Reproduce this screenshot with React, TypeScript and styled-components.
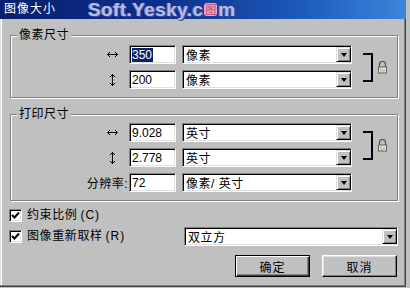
import React from 'react';
import styled, { createGlobalStyle } from 'styled-components';

const GlobalStyle = createGlobalStyle`
  html, body {
    margin: 0;
    padding: 0;
    background: #c0c0c0;
  }
  body {
    font-family: "Liberation Sans", "Noto Sans CJK SC", sans-serif;
    font-size: 12px;
    color: #000;
  }
`;

const Window = styled.div`
  width: 406px;
  height: 287px;
  box-sizing: border-box;
  background: #c0c0c0;
  box-shadow: inset -1px -1px #404040, inset -2px -2px #808080, inset 1px 1px #dfdfdf, inset 2px 2px #fff;
  display: flex;
  flex-direction: column;
  overflow: hidden;
`;

const TitleBar = styled.div`
  height: 19px;
  flex: none;
  display: flex;
  align-items: center;
  padding-left: 4px;
  gap: 32px;
  background: linear-gradient(90deg, #08206e 0%, #0c2f8c 40%, #1d5cbc 75%, #3c86da 100%);
`;

const Title = styled.span`
  color: #fff;
  font-size: 12px;
  line-height: 19px;
  letter-spacing: 1px;
`;

const Watermark = styled.span`
  font-family: "Liberation Sans", sans-serif;
  font-weight: 700;
  font-size: 19px;
  line-height: 19px;
  color: #b4bce4;
  letter-spacing: 0.4px;
  text-shadow: 1px 1px 0 #3c4c9c, -1px 0 0 #6070b8;
  display: flex;
  align-items: center;
`;

const Stamp = styled.span`
  font-family: "Noto Sans CJK SC", sans-serif;
  font-weight: 400;
  font-size: 11px;
  line-height: 13px;
  width: 13px;
  height: 13px;
  text-align: center;
  color: #c04070;
  background: #e8a8c8;
  border-radius: 3px;
  text-shadow: none;
  margin: 0 1px;
`;

const Body = styled.div`
  flex: 1;
  display: flex;
  flex-direction: column;
  padding: 16px 8px 0 10px;
`;

const Group = styled.div<{ $padTop: number; $gapTop: number }>`
  position: relative;
  margin-top: ${(p) => p.$gapTop}px;
  border: 1px solid #808080;
  box-shadow: inset 1px 1px #fff, 1px 1px #fff;
  padding: ${(p) => p.$padTop}px 0 8px 0;
`;

const GroupLabel = styled.span`
  position: absolute;
  top: -8px;
  left: 6px;
  padding: 0 2px;
  background: #c0c0c0;
  font-size: 12px;
  line-height: 15px;
  letter-spacing: 0.5px;
`;

const Rows = styled.div`
  display: grid;
  grid-template-columns: 112px 47px 170px 38px;
  grid-auto-rows: 19px;
  column-gap: 6px;
  row-gap: 6px;
`;

const RowLabel = styled.div<{ $shift?: number }>`
  display: flex;
  align-items: center;
  justify-content: flex-end;
  font-size: 12px;
  letter-spacing: 0.5px;
  margin-right: ${(p) => p.$shift ?? 0}px;
`;

const ArrowSlot = styled.span`
  display: flex;
  align-items: center;
  justify-content: center;
  width: 12px;
  margin-right: 5px;
`;

const Sunken = styled.div`
  box-sizing: border-box;
  background: #fff;
  border-style: solid;
  border-width: 1px;
  border-color: #808080 #fff #fff #808080;
  box-shadow: inset 1px 1px #000, inset -1px -1px #dfdfdf;
  display: flex;
  align-items: center;
  padding: 0 2px;
  font-size: 12px;
  height: 19px;
`;

const Selected = styled.span`
  background: #0a246a;
  color: #fff;
  padding-right: 1px;
`;

const SelectBox = styled(Sunken)<{ $width?: number }>`
  padding: 0 2px 0 3px;
  ${(p) => (p.$width ? `width: ${p.$width}px;` : '')}
`;

const SelectText = styled.span`
  flex: 1;
  letter-spacing: 0.5px;
`;

const DropButton = styled.div`
  width: 15px;
  height: 15px;
  box-sizing: border-box;
  background: #c0c0c0;
  border-style: solid;
  border-width: 1px;
  border-color: #dfdfdf #000 #000 #dfdfdf;
  box-shadow: inset 1px 1px #fff, inset -1px -1px #808080;
  display: flex;
  align-items: center;
  justify-content: center;
  margin-right: -2px;
`;

const Triangle = styled.span`
  width: 0;
  height: 0;
  border-left: 3.5px solid transparent;
  border-right: 3.5px solid transparent;
  border-top: 4px solid #000;
`;

const LinkCell = styled.div`
  grid-column: 4;
  grid-row: 1 / span 2;
  display: flex;
  align-items: center;
  padding-left: 5px;
  gap: 4px;
`;

const Bracket = styled.div`
  width: 8px;
  height: 25px;
  border: 2px solid #000;
  border-left: none;
`;

const ChecksArea = styled.div`
  display: flex;
  flex-direction: column;
  margin-top: 8px;
  gap: 5px;
`;

const CheckRow = styled.div`
  display: flex;
  align-items: center;
  height: 13px;
  gap: 5px;
  margin-left: -1px;
`;

const ResampleRow = styled.div`
  display: flex;
  align-items: center;
  height: 19px;
  gap: 5px;
  margin-left: -1px;
`;

const CheckBox = styled.div`
  width: 13px;
  height: 13px;
  box-sizing: border-box;
  background: #fff;
  border-style: solid;
  border-width: 1px;
  border-color: #808080 #fff #fff #808080;
  box-shadow: inset 1px 1px #000, inset -1px -1px #dfdfdf;
  display: flex;
  align-items: center;
  justify-content: center;
`;

const CheckText = styled.span`
  font-size: 12px;
  line-height: 13px;
  letter-spacing: 0.6px;
`;

const Mnemonic = styled.span`
  font-size: 12px;
  letter-spacing: 1px;
  margin-left: 3px;
`;

const Spacer = styled.div`
  flex: 1;
`;

const ButtonRow = styled.div`
  display: flex;
  justify-content: flex-end;
  gap: 12px;
  margin-top: 9px;
  padding-right: 1px;
`;

const Button = styled.div<{ $default?: boolean }>`
  width: 75px;
  height: 22px;
  box-sizing: border-box;
  background: #c0c0c0;
  display: flex;
  align-items: center;
  justify-content: center;
  font-size: 12px;
  letter-spacing: 1px;
  border: 1px solid ${(p) => (p.$default ? '#000' : '#fff')};
  ${(p) => (p.$default ? '' : 'border-right-color: #000; border-bottom-color: #000;')}
  box-shadow: ${(p) =>
    p.$default
      ? 'inset 1px 1px #fff, inset -1px -1px #404040, inset -2px -2px #808080'
      : 'inset -1px -1px #808080, inset 1px 1px #dfdfdf'};
`;

function WidthArrow(): JSX.Element {
  return (
    <svg width="11" height="7" viewBox="0 0 11 7">
      <path d="M0.5 3.5 H10.5 M3 1 L0.5 3.5 L3 6 M8 1 L10.5 3.5 L8 6" fill="none" stroke="#000" strokeWidth="1" />
    </svg>
  );
}

function HeightArrow(): JSX.Element {
  return (
    <svg width="7" height="12" viewBox="0 0 7 12">
      <path d="M3.5 0.5 V11.5 M1 3 L3.5 0.5 L6 3 M1 9 L3.5 11.5 L6 9" fill="none" stroke="#000" strokeWidth="1" />
    </svg>
  );
}

function LockIcon(): JSX.Element {
  return (
    <svg width="11" height="13" viewBox="0 0 11 13">
      <path d="M2.5 6 V3.5 A3 3 0 0 1 8.5 3.5 V6" fill="none" stroke="#505050" strokeWidth="1.2" />
      <rect x="1.5" y="6" width="8" height="6" fill="#e4e4c8" stroke="#606060" strokeWidth="1" />
      <rect x="3" y="8" width="2" height="1" fill="#a0a080" />
      <rect x="6" y="9" width="2" height="1" fill="#a0a080" />
      <rect x="4" y="10" width="2" height="1" fill="#b8b898" />
    </svg>
  );
}

function CheckMark(): JSX.Element {
  return (
    <svg width="9" height="9" viewBox="0 0 9 9">
      <path d="M1 4 L3.5 6.5 L8 1.5" fill="none" stroke="#000" strokeWidth="2" />
    </svg>
  );
}

function Select({ value, width }: { value: string; width?: number }): JSX.Element {
  return (
    <SelectBox $width={width}>
      <SelectText>{value}</SelectText>
      <DropButton>
        <Triangle />
      </DropButton>
    </SelectBox>
  );
}

export default function App(): JSX.Element {
  return (
    <>
      <GlobalStyle />
      <Window>
        <TitleBar>
          <Title>图像大小</Title>
          <Watermark>
            Soft.Yesky.c<Stamp>图</Stamp>m
          </Watermark>
        </TitleBar>
        <Body>
          <Group $padTop={9} $gapTop={0}>
            <GroupLabel>像素尺寸</GroupLabel>
            <Rows>
              <RowLabel>
                <ArrowSlot>
                  <WidthArrow />
                </ArrowSlot>
              </RowLabel>
              <Sunken>
                <Selected>350</Selected>
              </Sunken>
              <Select value="像素" />
              <LinkCell>
                <Bracket />
                <LockIcon />
              </LinkCell>
              <RowLabel>
                <ArrowSlot>
                  <HeightArrow />
                </ArrowSlot>
              </RowLabel>
              <Sunken>200</Sunken>
              <Select value="像素" />
            </Rows>
          </Group>
          <Group $padTop={8} $gapTop={16}>
            <GroupLabel>打印尺寸</GroupLabel>
            <Rows>
              <RowLabel>
                <ArrowSlot>
                  <WidthArrow />
                </ArrowSlot>
              </RowLabel>
              <Sunken>9.028</Sunken>
              <Select value="英寸" />
              <LinkCell>
                <Bracket />
                <LockIcon />
              </LinkCell>
              <RowLabel>
                <ArrowSlot>
                  <HeightArrow />
                </ArrowSlot>
              </RowLabel>
              <Sunken>2.778</Sunken>
              <Select value="英寸" />
              <RowLabel $shift={-5}>分辨率:</RowLabel>
              <Sunken>72</Sunken>
              <Select value="像素/ 英寸" />
            </Rows>
          </Group>
          <ChecksArea>
            <CheckRow>
              <CheckBox>
                <CheckMark />
              </CheckBox>
              <CheckText>
                约束比例<Mnemonic>(C)</Mnemonic>
              </CheckText>
            </CheckRow>
            <ResampleRow>
              <CheckBox>
                <CheckMark />
              </CheckBox>
              <CheckText>
                图像重新取样<Mnemonic>(R)</Mnemonic>
              </CheckText>
              <Spacer />
              <Select value="双立方" width={214} />
            </ResampleRow>
          </ChecksArea>
          <ButtonRow>
            <Button $default>确定</Button>
            <Button>取消</Button>
          </ButtonRow>
        </Body>
      </Window>
    </>
  );
}
